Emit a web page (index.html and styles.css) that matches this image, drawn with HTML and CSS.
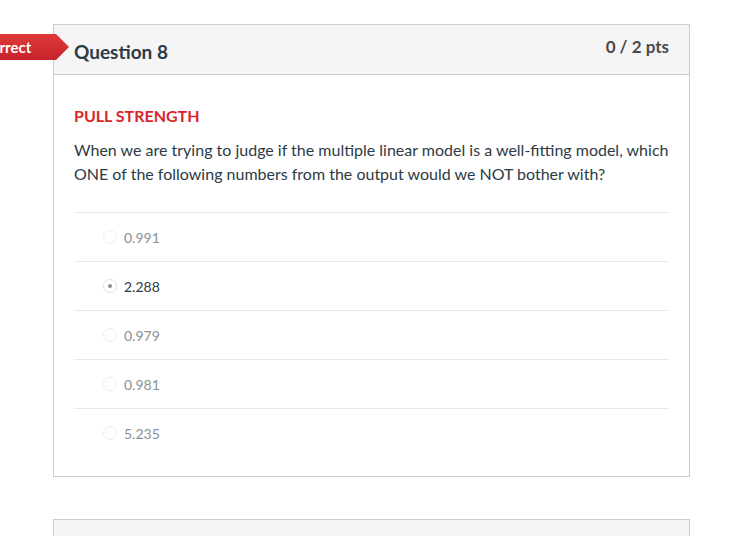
FILE: index.html
```html
<!DOCTYPE html>
<html>
<head>
<meta charset="utf-8">
<link rel="stylesheet" href="styles.css">
</head>
<body>
<div class="page">
  <div class="card">
    <div class="badge">Incorrect</div>
    <div class="card-header">
      <h2 class="q-title">Question 8</h2>
      <div class="pts">0 / 2 pts</div>
    </div>
    <div class="card-body">
      <p class="topic">PULL STRENGTH</p>
      <p class="question">When we are trying to judge if the multiple linear model is a well-fitting model, which ONE of the following numbers from the output would we NOT bother with?</p>
      <div class="answers">
        <div class="answer"><span class="radio"></span><span class="label">0.991</span></div>
        <div class="answer selected"><span class="radio"></span><span class="label">2.288</span></div>
        <div class="answer"><span class="radio"></span><span class="label">0.979</span></div>
        <div class="answer"><span class="radio"></span><span class="label">0.981</span></div>
        <div class="answer"><span class="radio"></span><span class="label">5.235</span></div>
      </div>
    </div>
  </div>
  <div class="card next">
    <div class="card-header"></div>
  </div>
</div>
</body>
</html>
```
FILE: styles.css
```css
html, body {
  margin: 0;
  padding: 0;
  background: #fff;
}
body {
  font-family: Lato, "Open Sans", sans-serif;
  color: #2d3b45;
  overflow: hidden;
}
.page {
  padding: 24px 50px 0 53px;
  display: flex;
  flex-direction: column;
  gap: 42px;
}
.card {
  position: relative;
  border: 1px solid #c7cdd1;
  width: 635px;
}
.card-header {
  background: #f5f5f5;
  border-bottom: 1px solid #c7cdd1;
  height: 49px;
  display: flex;
  justify-content: space-between;
  align-items: center;
  padding: 0 20px;
}
.next .card-header {
  border-bottom: none;
}
.q-title {
  margin: 0;
  font-size: 19px;
  font-weight: 700;
  color: #2d3b45;
  position: relative;
  top: 2px;
}
.pts {
  font-size: 17px;
  font-weight: 700;
  color: #4a4a4a;
  position: relative;
  top: -3px;
}
.badge {
  position: absolute;
  left: -132px;
  top: 9px;
  height: 26px;
  width: 147px;
  padding-left: 49px;
  box-sizing: border-box;
  background: linear-gradient(#e03a3a, #c5242a);
  color: #fff;
  font-weight: 700;
  font-size: 15px;
  line-height: 26px;
  clip-path: polygon(0 0, 134px 0, 147px 50%, 134px 100%, 0 100%);
}
.card-body {
  padding: 31px 20px 19px 20px;
}
.topic {
  margin: 0;
  font-size: 16px;
  font-weight: 700;
  color: #d9262b;
  line-height: 20px;
}
.question {
  margin: 12px 0 0 0;
  font-size: 16px;
  line-height: 24px;
  color: #2d3b45;
}
.answers {
  margin-top: 26px;
  border-top: 1px solid #e9ecee;
}
.answer {
  height: 48px;
  border-bottom: 1px solid #e6e9eb;
  display: flex;
  align-items: center;
  padding-left: 29px;
  gap: 7px;
  font-size: 14px;
  color: #8b9196;
}
.answer:last-child {
  border-bottom: none;
}
.radio {
  width: 12px;
  height: 12px;
  border-radius: 50%;
  border: 1px solid #eceeef;
  box-sizing: content-box;
  position: relative;
}
.selected {
  color: #2d3b45;
}
.selected .radio {
  border-color: #e2e4e6;
  box-shadow: 0 0 1px #d8dadc;
}
.selected .radio::after {
  content: "";
  position: absolute;
  left: 4px;
  top: 4px;
  width: 4px;
  height: 4px;
  border-radius: 50%;
  background: #8a8f94;
}
```
